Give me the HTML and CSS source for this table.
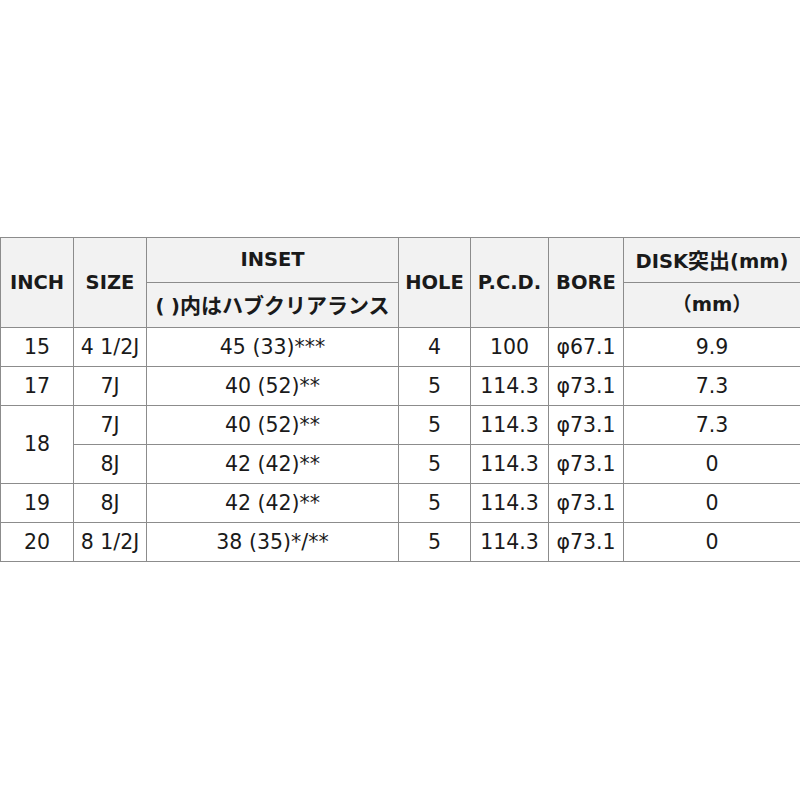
FILE: index.html
```html
<!DOCTYPE html>
<html lang="ja">
<head>
<meta charset="utf-8">
<link rel="stylesheet" href="styles.css">
</head>
<body>
<table class="spec">
  <colgroup>
    <col class="c-inch"><col class="c-size"><col class="c-inset"><col class="c-hole"><col class="c-pcd"><col class="c-bore"><col class="c-disk">
  </colgroup>
  <thead>
    <tr class="h1">
      <th rowspan="2">INCH</th>
      <th rowspan="2">SIZE</th>
      <th>INSET</th>
      <th rowspan="2">HOLE</th>
      <th rowspan="2">P.C.D.</th>
      <th rowspan="2">BORE</th>
      <th>DISK<span class="jp">突出</span>(mm)</th>
    </tr>
    <tr class="h2">
      <th>( )<span class="jp">内はハブクリアランス</span></th>
      <th>（mm）</th>
    </tr>
  </thead>
  <tbody>
    <tr><td>15</td><td>4 1/2J</td><td>45 (33)***</td><td>4</td><td>100</td><td>φ67.1</td><td>9.9</td></tr>
    <tr><td>17</td><td>7J</td><td>40 (52)**</td><td>5</td><td>114.3</td><td>φ73.1</td><td>7.3</td></tr>
    <tr><td rowspan="2">18</td><td>7J</td><td>40 (52)**</td><td>5</td><td>114.3</td><td>φ73.1</td><td>7.3</td></tr>
    <tr><td>8J</td><td>42 (42)**</td><td>5</td><td>114.3</td><td>φ73.1</td><td>0</td></tr>
    <tr><td>19</td><td>8J</td><td>42 (42)**</td><td>5</td><td>114.3</td><td>φ73.1</td><td>0</td></tr>
    <tr><td>20</td><td>8 1/2J</td><td>38 (35)*/**</td><td>5</td><td>114.3</td><td>φ73.1</td><td>0</td></tr>
  </tbody>
</table>
</body>
</html>
```

FILE: styles.css
```css
html, body {
  margin: 0;
  padding: 0;
  background: #ffffff;
}
.spec {
  margin-top: 237px;
  width: 800px;
  border-collapse: collapse;
  table-layout: fixed;
  font-family: "DejaVu Sans", "Noto Sans CJK JP", sans-serif;
  color: #1a1a1a;
}
.c-inch { width: 73px; }
.c-size { width: 73px; }
.c-inset { width: 252px; }
.c-hole { width: 72px; }
.c-pcd { width: 78px; }
.c-bore { width: 75px; }
.c-disk { width: 177px; }
.spec th, .spec td {
  border: 1px solid #8c8c8c;
  padding: 0;
  text-align: center;
  white-space: nowrap;
  overflow: hidden;
}
.spec th {
  background: #f2f2f2;
  font-weight: 700;
  font-size: 19.5px;
  height: 44px;
  line-height: 1;
}
.spec th .jp {
  font-family: "Noto Sans CJK JP", sans-serif;
  font-size: 21px;
}
.spec td {
  font-size: 20.5px;
  font-weight: 400;
  height: 38px;
  line-height: 1;
}
```
